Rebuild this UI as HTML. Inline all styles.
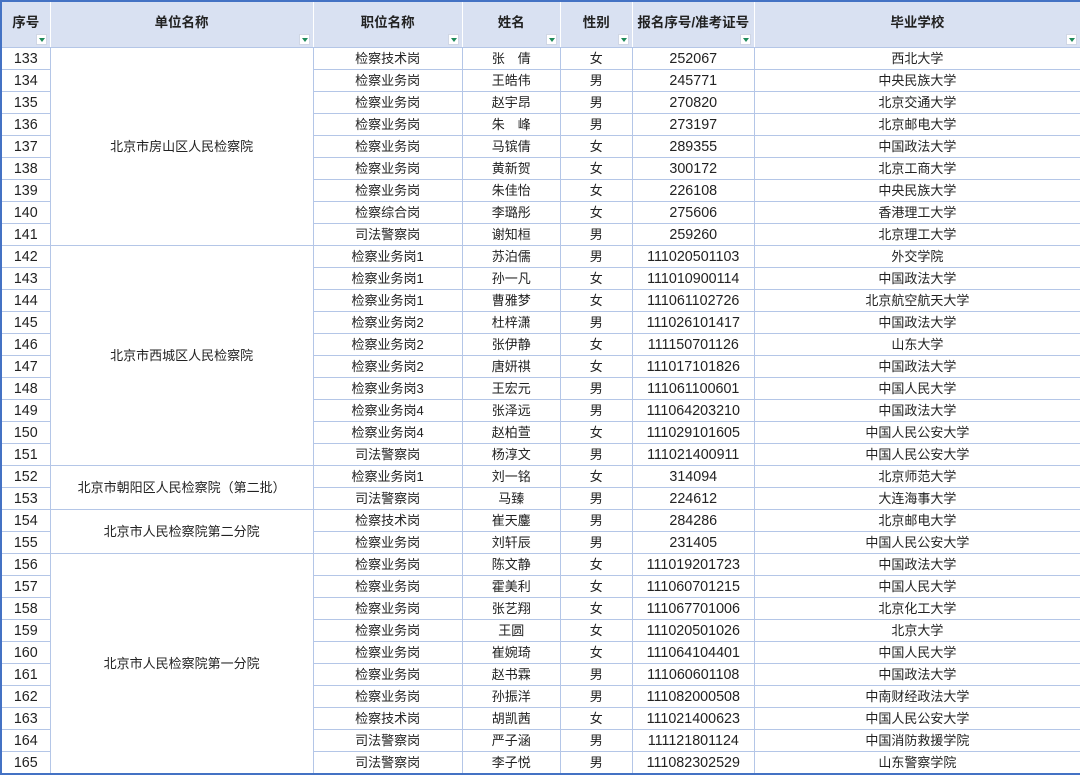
<!DOCTYPE html>
<html><head><meta charset="utf-8"><style>
html,body{margin:0;padding:0;background:#fff;width:1080px;height:775px;overflow:hidden}
table{border-collapse:collapse;table-layout:fixed;width:1081px;font-family:"Liberation Sans","Noto Sans CJK SC",sans-serif;font-size:13px;color:#222;border-left:2px solid #4472c4;border-top:2px solid #4472c4;border-bottom:2px solid #4472c4}
td{border:1px solid #b4c6e7;padding:1px 0 0 0;text-align:center;line-height:20px;white-space:nowrap;overflow:hidden}
tr td:first-child,tr td:nth-last-child(2){font-size:14.3px}
tr{height:22px}
tr.h{height:46px}
tr.h td{background:#d9e1f2;font-weight:bold;border-left:1px solid #fff;border-right:1px solid #fff;border-bottom:1px solid #b4c6e7;position:relative;font-size:13.5px;vertical-align:middle;padding:0 0 3px 0}
.dd{position:absolute;right:3px;bottom:2px;width:11px;height:11px;background:#fff;border:1px solid #d0d7e5;box-sizing:border-box}
.dd:after{content:"";position:absolute;left:2px;top:3px;border-left:3px solid transparent;border-right:3px solid transparent;border-top:4px solid #1e8a5a}
</style></head><body>
<table>
<colgroup><col style="width:49px"><col style="width:263px"><col style="width:149px"><col style="width:98px"><col style="width:72px"><col style="width:122px"><col style="width:326px"></colgroup>
<tr class="h"><td>序号<span class="dd"></span></td><td>单位名称<span class="dd"></span></td><td>职位名称<span class="dd"></span></td><td>姓名<span class="dd"></span></td><td>性别<span class="dd"></span></td><td>报名序号/准考证号<span class="dd"></span></td><td>毕业学校<span class="dd"></span></td></tr>
<tr><td>133</td><td rowspan="9">北京市房山区人民检察院</td><td>检察技术岗</td><td>张　倩</td><td>女</td><td>252067</td><td>西北大学</td></tr>
<tr><td>134</td><td>检察业务岗</td><td>王皓伟</td><td>男</td><td>245771</td><td>中央民族大学</td></tr>
<tr><td>135</td><td>检察业务岗</td><td>赵宇昂</td><td>男</td><td>270820</td><td>北京交通大学</td></tr>
<tr><td>136</td><td>检察业务岗</td><td>朱　峰</td><td>男</td><td>273197</td><td>北京邮电大学</td></tr>
<tr><td>137</td><td>检察业务岗</td><td>马镔倩</td><td>女</td><td>289355</td><td>中国政法大学</td></tr>
<tr><td>138</td><td>检察业务岗</td><td>黄新贺</td><td>女</td><td>300172</td><td>北京工商大学</td></tr>
<tr><td>139</td><td>检察业务岗</td><td>朱佳怡</td><td>女</td><td>226108</td><td>中央民族大学</td></tr>
<tr><td>140</td><td>检察综合岗</td><td>李璐彤</td><td>女</td><td>275606</td><td>香港理工大学</td></tr>
<tr><td>141</td><td>司法警察岗</td><td>谢知桓</td><td>男</td><td>259260</td><td>北京理工大学</td></tr>
<tr><td>142</td><td rowspan="10">北京市西城区人民检察院</td><td>检察业务岗1</td><td>苏泊儒</td><td>男</td><td>111020501103</td><td>外交学院</td></tr>
<tr><td>143</td><td>检察业务岗1</td><td>孙一凡</td><td>女</td><td>111010900114</td><td>中国政法大学</td></tr>
<tr><td>144</td><td>检察业务岗1</td><td>曹雅梦</td><td>女</td><td>111061102726</td><td>北京航空航天大学</td></tr>
<tr><td>145</td><td>检察业务岗2</td><td>杜梓潇</td><td>男</td><td>111026101417</td><td>中国政法大学</td></tr>
<tr><td>146</td><td>检察业务岗2</td><td>张伊静</td><td>女</td><td>111150701126</td><td>山东大学</td></tr>
<tr><td>147</td><td>检察业务岗2</td><td>唐妍祺</td><td>女</td><td>111017101826</td><td>中国政法大学</td></tr>
<tr><td>148</td><td>检察业务岗3</td><td>王宏元</td><td>男</td><td>111061100601</td><td>中国人民大学</td></tr>
<tr><td>149</td><td>检察业务岗4</td><td>张泽远</td><td>男</td><td>111064203210</td><td>中国政法大学</td></tr>
<tr><td>150</td><td>检察业务岗4</td><td>赵柏萱</td><td>女</td><td>111029101605</td><td>中国人民公安大学</td></tr>
<tr><td>151</td><td>司法警察岗</td><td>杨淳文</td><td>男</td><td>111021400911</td><td>中国人民公安大学</td></tr>
<tr><td>152</td><td rowspan="2">北京市朝阳区人民检察院（第二批）</td><td>检察业务岗1</td><td>刘一铭</td><td>女</td><td>314094</td><td>北京师范大学</td></tr>
<tr><td>153</td><td>司法警察岗</td><td>马臻</td><td>男</td><td>224612</td><td>大连海事大学</td></tr>
<tr><td>154</td><td rowspan="2">北京市人民检察院第二分院</td><td>检察技术岗</td><td>崔天鏖</td><td>男</td><td>284286</td><td>北京邮电大学</td></tr>
<tr><td>155</td><td>检察业务岗</td><td>刘轩辰</td><td>男</td><td>231405</td><td>中国人民公安大学</td></tr>
<tr><td>156</td><td rowspan="10">北京市人民检察院第一分院</td><td>检察业务岗</td><td>陈文静</td><td>女</td><td>111019201723</td><td>中国政法大学</td></tr>
<tr><td>157</td><td>检察业务岗</td><td>霍美利</td><td>女</td><td>111060701215</td><td>中国人民大学</td></tr>
<tr><td>158</td><td>检察业务岗</td><td>张艺翔</td><td>女</td><td>111067701006</td><td>北京化工大学</td></tr>
<tr><td>159</td><td>检察业务岗</td><td>王圆</td><td>女</td><td>111020501026</td><td>北京大学</td></tr>
<tr><td>160</td><td>检察业务岗</td><td>崔婉琦</td><td>女</td><td>111064104401</td><td>中国人民大学</td></tr>
<tr><td>161</td><td>检察业务岗</td><td>赵书霖</td><td>男</td><td>111060601108</td><td>中国政法大学</td></tr>
<tr><td>162</td><td>检察业务岗</td><td>孙振洋</td><td>男</td><td>111082000508</td><td>中南财经政法大学</td></tr>
<tr><td>163</td><td>检察技术岗</td><td>胡凯茜</td><td>女</td><td>111021400623</td><td>中国人民公安大学</td></tr>
<tr><td>164</td><td>司法警察岗</td><td>严子涵</td><td>男</td><td>111121801124</td><td>中国消防救援学院</td></tr>
<tr><td>165</td><td>司法警察岗</td><td>李子悦</td><td>男</td><td>111082302529</td><td>山东警察学院</td></tr>
</table>
</body></html>
